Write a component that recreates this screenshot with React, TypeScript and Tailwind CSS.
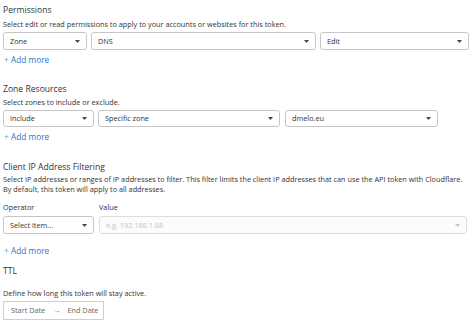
import React from 'react';

function Caret({ light }: { light?: boolean }) {
    return (
        <svg width="5" height="3" viewBox="0 0 5 3" className={light ? 'text-[#c8c8c8]' : 'text-[#444]'}>
            <path d="M0 0 L5 0 L2.5 3 Z" fill="currentColor" />
        </svg>
    );
}

function Select({ label, className }: { label: string; className?: string }) {
    return (
        <div className={`flex items-center justify-between h-full border border-[#c6c6c6] rounded-[3px] bg-white pl-[6px] pr-[6px] ${className ?? ''}`}>
            <span className="text-[7.3px] text-[#333]">{label}</span>
            <Caret />
        </div>
    );
}

function AddMore() {
    return (
        <div className="h-[12px] leading-[12px] text-[8.3px] font-medium text-[#3670c2] pl-[1px]">
            <span className="text-[#6d95cf]">+</span> Add more
        </div>
    );
}

const title = 'h-[14px] leading-[14px] text-[8.6px] text-[#333]';
const desc = 'h-[10px] leading-[10px] text-[7.3px] text-[#333] whitespace-nowrap';

export default function App() {
    return (
        <div className="w-[474px] h-[324px] bg-white overflow-hidden pt-[3px] pl-[3px] pr-[5px] font-['Open_Sans',sans-serif]">
            <h3 className={title}>Permissions</h3>
            <p className={`${desc} mt-[2px]`}>
                Select edit or read permissions to apply to your accounts or websites for this token.
            </p>
            <div className="flex gap-[4px] h-[18px] mt-[3px]">
                <Select label="Zone" className="w-[84px]" />
                <Select label="DNS" className="w-[225px]" />
                <Select label="Edit" className="w-[149px]" />
            </div>
            <div className="mt-[4px]">
                <AddMore />
            </div>

            <h3 className={`${title} mt-[16px]`}>Zone Resources</h3>
            <p className={`${desc} mt-[1px]`}>Select zones to include or exclude.</p>
            <div className="flex h-[17px] mt-[3px]">
                <Select label="Include" className="w-[91px]" />
                <Select label="Specific zone" className="w-[182px] ml-[4px]" />
                <Select label="dmelo.eu" className="w-[153px] ml-[5px]" />
            </div>
            <div className="mt-[4px]">
                <AddMore />
            </div>

            <h3 className={`${title} mt-[17px]`}>Client IP Address Filtering</h3>
            <p className={desc}>
                Select IP addresses or ranges of IP addresses to filter. This filter limits the client IP addresses that can use the API token with Cloudflare.
            </p>
            <p className={desc}>By default, this token will apply to all addresses.</p>
            <div className="flex mt-[8px] h-[10px] leading-[10px] text-[7.3px] text-[#333]">
                <span className="w-[96px]">Operator</span>
                <span>Value</span>
            </div>
            <div className="flex gap-[5px] h-[18px] mt-[4px]">
                <Select label="Select item..." className="w-[91px]" />
                <div className="w-[368px] flex items-center justify-between border border-[#dedede] rounded-[3px] bg-[#fcfcfc] pl-[6px] pr-[6px]">
                    <span className="text-[7.3px] text-[#c4c4c4]">e.g. 192.168.1.88</span>
                    <Caret light />
                </div>
            </div>
            <div className="mt-[11px]">
                <AddMore />
            </div>

            <h3 className={`${title} mt-[7px]`}>TTL</h3>
            <p className={`${desc} mt-[10px]`}>Define how long this token will stay active.</p>
            <div className="flex items-center w-[101px] h-[19px] mt-[3px] border border-[#cfcfcf] pl-[7px] text-[7.3px] text-[#666]">
                <span>Start Date</span>
                <span className="ml-[8px]">→</span>
                <span className="ml-[7px]">End Date</span>
            </div>
        </div>
    );
}
